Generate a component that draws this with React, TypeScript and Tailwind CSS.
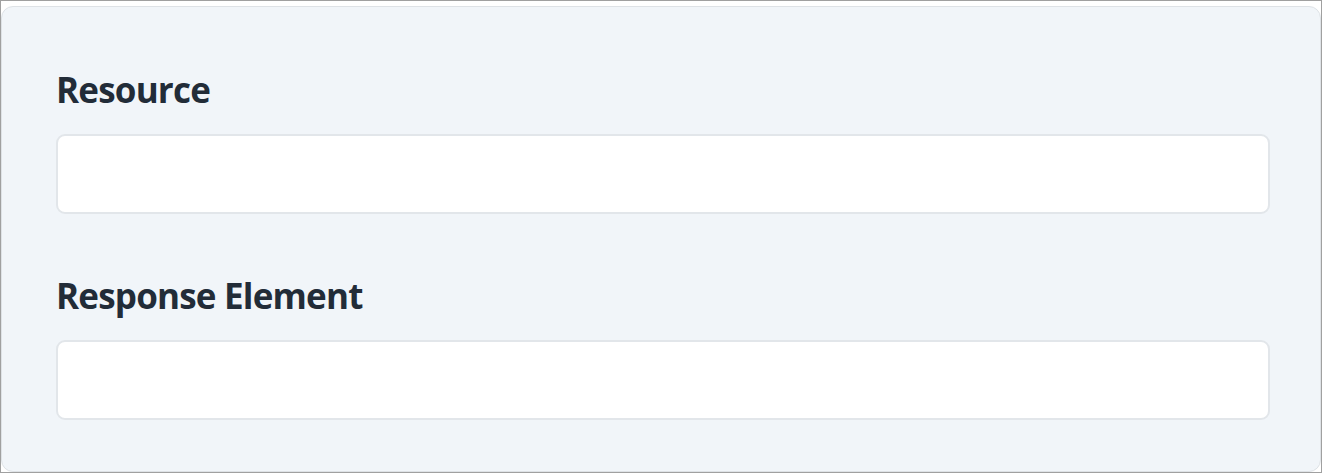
import React from "react";

export default function App() {
  return (
    <div className="w-[1322px] h-[473px] border border-[#a0a0a0] bg-white pt-[5px] box-border">
      <div className="h-full rounded-xl border border-[#dee2e6] bg-[#f1f5f9] pl-[54px] pt-[61px] box-border">
        <label className="block text-[35px] leading-[44px] font-bold tracking-[-0.8px] text-[#222c38] [font-family:'Open_Sans',sans-serif]">
          Resource
        </label>
        <input
          type="text"
          className="mt-[22px] block w-[1214px] h-[80px] rounded-[9px] border-2 border-[#e2e6ea] bg-white outline-none"
        />
        <label className="mt-[60px] block text-[35px] leading-[44px] font-bold tracking-[-0.8px] text-[#222c38] [font-family:'Open_Sans',sans-serif]">
          Response Element
        </label>
        <input
          type="text"
          className="mt-[22px] block w-[1214px] h-[80px] rounded-[9px] border-2 border-[#e2e6ea] bg-white outline-none"
        />
      </div>
    </div>
  );
}
